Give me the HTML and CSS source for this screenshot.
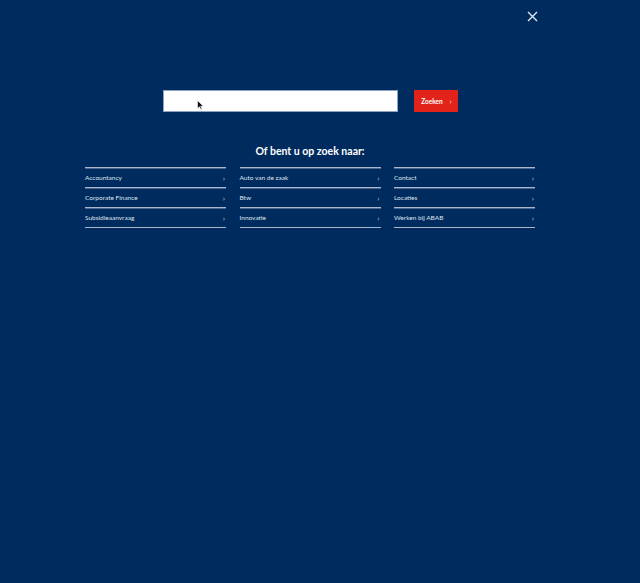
FILE: index.html
```html
<!DOCTYPE html>
<html lang="nl">
<head>
<meta charset="utf-8">
<title>Zoeken</title>
<link rel="stylesheet" href="styles.css">
</head>
<body>
<div class="page">
  <div class="container">
    <div class="topbar">
      <button class="close" aria-label="Sluiten">
        <svg width="11" height="11" viewBox="0 0 11 11"><path d="M1 1L10 10M10 1L1 10" stroke="#e3e8f0" stroke-width="1.4" fill="none"/></svg>
      </button>
    </div>
    <form class="search">
      <div class="field">
        <input class="input" type="text" aria-label="Zoeken">
        <svg class="cursor" width="7" height="10" viewBox="0 0 7 10"><path d="M0.5 0.5V8.5L2.5 6.8L3.9 9.5L5 9L3.7 6.3H6.3Z" fill="#111" stroke="#fff" stroke-width="0.6"/></svg>
      </div>
      <button class="btn" type="button">Zoeken <span class="chev">›</span></button>
    </form>
    <h2 class="title">Of bent u op zoek naar:</h2>
    <div class="cols">
      <ul class="list">
        <li><a href="#">Accountancy<span>›</span></a></li>
        <li><a href="#">Corporate Finance<span>›</span></a></li>
        <li><a href="#">Subsidieaanvraag<span>›</span></a></li>
      </ul>
      <ul class="list">
        <li><a href="#">Auto van de zaak<span>›</span></a></li>
        <li><a href="#">Btw<span>›</span></a></li>
        <li><a href="#">Innovatie<span>›</span></a></li>
      </ul>
      <ul class="list">
        <li><a href="#">Contact<span>›</span></a></li>
        <li><a href="#">Locaties<span>›</span></a></li>
        <li><a href="#">Werken bij ABAB<span>›</span></a></li>
      </ul>
    </div>
  </div>
</div>
</body>
</html>
```
FILE: styles.css
```css
html, body {
  margin: 0;
  padding: 0;
  background: #002b5e;
  height: 100%;
}
body {
  font-family: Lato, "Open Sans", "Liberation Sans", sans-serif;
  color: #fff;
}
.page {
  width: 620px;
  min-height: 583px;
}
.container {
  width: 450px;
  margin: 0 auto;
}
.topbar {
  display: flex;
  justify-content: flex-end;
  padding-top: 11px;
  height: 90px;
  box-sizing: border-box;
}
.close {
  background: none;
  border: 0;
  padding: 0;
  margin-right: -3px;
  width: 11px;
  height: 11px;
  display: block;
  cursor: pointer;
}
.close svg { display: block; }
.search {
  display: flex;
  justify-content: center;
  gap: 16px;
  margin: 0 0 0 1px;
}
.field {
  position: relative;
}
.input {
  display: block;
  width: 235px;
  height: 22px;
  box-sizing: border-box;
  border: 1px solid #8fa3c2;
  background: #fff;
  margin: 0;
  padding: 0 6px;
}
.cursor {
  position: absolute;
  left: 34px;
  top: 10px;
}
.btn {
  height: 22px;
  width: 44px;
  background: #e2231a;
  color: #fff;
  border: 0;
  font-family: Lato, "Liberation Sans", sans-serif;
  font-weight: 700;
  font-size: 6.5px;
  padding: 0 0 0 1px;
  display: flex;
  align-items: center;
  justify-content: center;
  gap: 7px;
}
.chev {
  font-weight: 400;
  font-size: 8px;
  opacity: 0.85;
}
.title {
  margin: 32px 0 0;
  text-align: center;
  font-weight: 700;
  font-size: 10.5px;
  line-height: 14px;
  height: 23px;
}
.cols {
  display: grid;
  grid-template-columns: repeat(3, 141px);
  justify-content: space-between;
}
.list {
  list-style: none;
  margin: 0;
  padding: 0;
}
.list li {
  border-top: 1px solid #a9b6cb;
  box-shadow: inset 0 1px 0 #4c6590;
}
.list li:last-child {
  border-bottom: 1px solid #a9b6cb;
}
.list a {
  display: flex;
  justify-content: space-between;
  align-items: center;
  height: 19px;
  color: #dfe5ee;
  text-decoration: none;
  font-size: 6.5px;
}
.list a span {
  font-size: 8px;
  color: #b7c3d5;
  padding-right: 1px;
}
```
